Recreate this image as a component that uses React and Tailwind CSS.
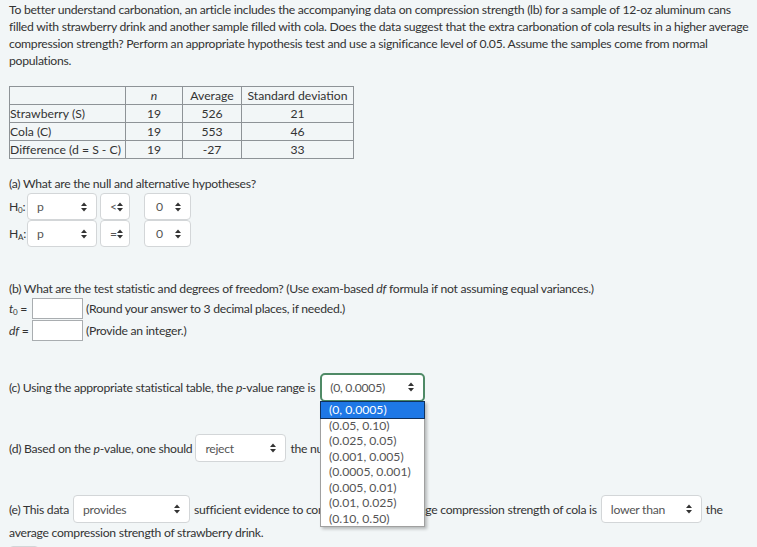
import React from 'react';

const Arrows = () => (
  <svg width="6" height="10" viewBox="0 0 6 10" className="shrink-0">
    <path d="M3 0.5 L6 4 L0 4 Z" fill="#333" />
    <path d="M3 9.5 L6 6 L0 6 Z" fill="#333" />
  </svg>
);

const Select = ({ value, className = '' }) => (
  <span
    className={`inline-flex items-center justify-between rounded-[4px] border border-[#d3d6d8] bg-white pl-[9px] pr-[9px] h-[27px] align-middle text-[#555] ${className}`}
  >
    <span>{value}</span>
    <Arrows />
  </span>
);

const Box = () => (
  <span className="inline-block w-[51px] h-[21px] border border-[#a9adb0] bg-white align-middle" />
);

const options = [
  '(0, 0.0005)',
  '(0.05, 0.10)',
  '(0.025, 0.05)',
  '(0.001, 0.005)',
  '(0.0005, 0.001)',
  '(0.005, 0.01)',
  '(0.01, 0.025)',
  '(0.10, 0.50)',
];

const rows = [
  ['Strawberry (S)', '19', '526', '21'],
  ['Cola (C)', '19', '553', '46'],
  ['Difference (d = S - C)', '19', '-27', '33'],
];

const cell = 'border border-[#8e9397] p-0';

export default function App() {
  return (
    <div
      className="relative h-[547px] overflow-hidden bg-[#f2f6f7] text-[#333] text-[12.2px] tracking-[-0.27px] leading-[17px] pl-[9px] pr-[8px] pt-[1px]"
      style={{ fontFamily: 'Lato, "Open Sans", sans-serif' }}
    >
      <p>
        To better understand carbonation, an article includes the accompanying data on compression strength (lb) for a
        sample of 12-oz aluminum cans filled with strawberry drink and another sample filled with cola. Does the data
        suggest that the extra carbonation of cola results in a higher average compression strength? Perform an
        appropriate hypothesis test and use a significance level of 0.05. Assume the samples come from normal
        populations.
      </p>

      <table className="mt-[17px] border-collapse border border-[#8e9397] table-fixed w-[344px] tracking-normal">
        <thead>
          <tr className="h-[17px]">
            <th className={`${cell} w-[116px] font-normal`}></th>
            <th className={`${cell} w-[57px] font-normal italic`}>n</th>
            <th className={`${cell} w-[59px] font-normal`}>Average</th>
            <th className={`${cell} w-[112px] font-normal`}>Standard deviation</th>
          </tr>
        </thead>
        <tbody>
          {rows.map((r) => (
            <tr key={r[0]} className="h-[17px]">
              <td className={`${cell} text-left`}>{r[0]}</td>
              <td className={`${cell} text-center`}>{r[1]}</td>
              <td className={`${cell} text-center`}>{r[2]}</td>
              <td className={`${cell} text-center`}>{r[3]}</td>
            </tr>
          ))}
        </tbody>
      </table>

      <p className="mt-[16px]">(a) What are the null and alternative hypotheses?</p>
      <div className="flex items-center mt-[1px] h-[27px]">
        <span className="w-[18px]">
          H<sub className="text-[8px]">0</sub>:
        </span>
        <Select value="p" className="w-[70px]" />
        <Select value="<" className="w-[30px] ml-[3px] pl-[9px] pr-[4px]" />
        <Select value="0" className="w-[47px] ml-[14px] pl-[11px]" />
      </div>
      <div className="flex items-center mt-0 h-[27px]">
        <span className="w-[18px]">
          H<sub className="text-[8px]">A</sub>:
        </span>
        <Select value="p" className="w-[70px]" />
        <Select value="=" className="w-[30px] ml-[3px] pl-[9px] pr-[4px]" />
        <Select value="0" className="w-[47px] ml-[14px] pl-[11px]" />
      </div>

      <p className="mt-[33px]">
        (b) What are the test statistic and degrees of freedom? (Use exam-based <i>df</i> formula if not assuming equal
        variances.)
      </p>
      <div className="flex items-center h-[21px] mt-[1px]">
        <span className="w-[23px]">
          <i>t</i>
          <sub className="text-[8px]">0</sub> =
        </span>
        <Box />
        <span className="ml-[3px]">(Round your answer to 3 decimal places, if needed.)</span>
      </div>
      <div className="flex items-center h-[21px] mt-[1px]">
        <span className="w-[23px]">
          <i>df</i> =
        </span>
        <Box />
        <span className="ml-[3px]">(Provide an integer.)</span>
      </div>

      <div className="flex items-center mt-[32px] h-[28px]">
        <span>
          (c) Using the appropriate statistical table, the <i>p</i>-value range is
        </span>
        <span className="inline-flex items-center justify-between w-[105px] h-[29px] ml-[5px] rounded-[5px] border-2 border-[#4f8a66] bg-white pl-[8px] pr-[9px] text-[#555]">
          <span>(0, 0.0005)</span>
          <Arrows />
        </span>
      </div>

      <div className="flex items-center mt-[33px] h-[28px]">
        <span>
          (d) Based on the <i>p</i>-value, one should
        </span>
        <Select value="reject" className="w-[91px] ml-[3px] h-[28px]" />
        <span className="ml-[4px]">the null hypothesis.</span>
      </div>

      <div className="flex items-center mt-[33px] h-[28px] whitespace-nowrap">
        <span>(e) This data</span>
        <Select value="provides" className="w-[117px] ml-[4px] h-[28px]" />
        <span className="ml-[4px]">
          sufficient evidence to conclude that the average compression strength of cola is
        </span>
        <Select value="lower than" className="w-[101px] ml-[4px] h-[28px]" />
        <span className="ml-[4px]">the</span>
      </div>
      <p className="mt-[1px]">average compression strength of strawberry drink.</p>
      <div className="mt-[5px] w-[30px] h-[24px] rounded-[4px] border border-[#d3d6d8] bg-[#f7f9fa]" />

      <div className="absolute left-[320px] top-[401px] w-[105px] bg-white border border-[#a0a0a0] shadow-[2px_2px_3px_rgba(0,0,0,0.25)] text-[#555] tracking-normal">
        {options.map((o, i) => (
          <div
            key={o}
            className={`h-[15.5px] leading-[15.5px] pl-[8px] ${i === 0 ? 'bg-[#1e78e6] text-white outline outline-1 outline-[#10315c]' : ''}`}
          >
            {o}
          </div>
        ))}
      </div>
    </div>
  );
}
